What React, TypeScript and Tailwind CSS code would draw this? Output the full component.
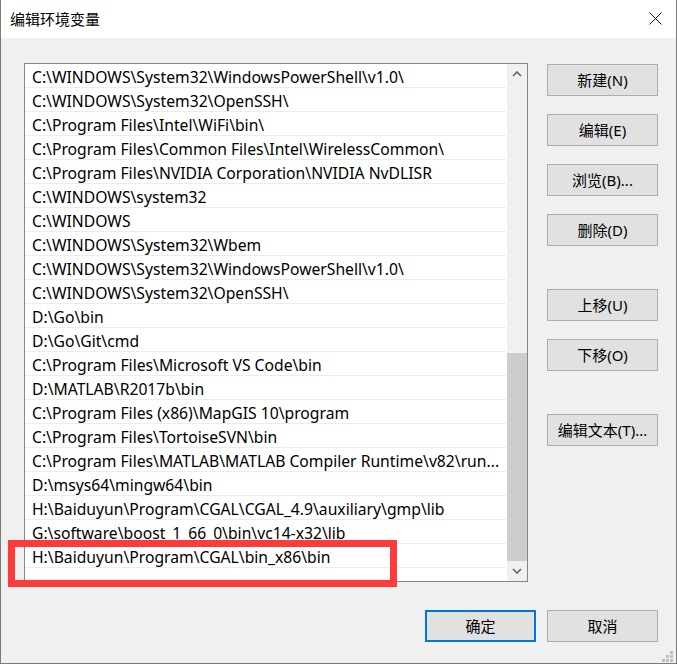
import React from "react";

const paths = [
  "C:\\WINDOWS\\System32\\WindowsPowerShell\\v1.0\\",
  "C:\\WINDOWS\\System32\\OpenSSH\\",
  "C:\\Program Files\\Intel\\WiFi\\bin\\",
  "C:\\Program Files\\Common Files\\Intel\\WirelessCommon\\",
  "C:\\Program Files\\NVIDIA Corporation\\NVIDIA NvDLISR",
  "C:\\WINDOWS\\system32",
  "C:\\WINDOWS",
  "C:\\WINDOWS\\System32\\Wbem",
  "C:\\WINDOWS\\System32\\WindowsPowerShell\\v1.0\\",
  "C:\\WINDOWS\\System32\\OpenSSH\\",
  "D:\\Go\\bin",
  "D:\\Go\\Git\\cmd",
  "C:\\Program Files\\Microsoft VS Code\\bin",
  "D:\\MATLAB\\R2017b\\bin",
  "C:\\Program Files (x86)\\MapGIS 10\\program",
  "C:\\Program Files\\TortoiseSVN\\bin",
  "C:\\Program Files\\MATLAB\\MATLAB Compiler Runtime\\v82\\run...",
  "D:\\msys64\\mingw64\\bin",
  "H:\\Baiduyun\\Program\\CGAL\\CGAL_4.9\\auxiliary\\gmp\\lib",
  "G:\\software\\boost_1_66_0\\bin\\vc14-x32\\lib",
  "H:\\Baiduyun\\Program\\CGAL\\bin_x86\\bin",
];

function Btn({ label, primary }: { label: string; primary?: boolean }) {
  return (
    <div
      className={
        "w-[111px] h-[32px] flex items-center justify-center bg-[#e1e1e1] text-[15px] text-black " +
        (primary ? "border-2 border-[#0078d7]" : "border border-[#adadad]")
      }
    >
      {label}
    </div>
  );
}

export default function App() {
  return (
    <div
      className="relative w-[677px] h-[664px] flex flex-col bg-[#f0f0f0] border-x border-b border-[#7a7a7a] overflow-hidden"
      style={{ fontFamily: '"Noto Sans", "Noto Sans CJK SC", sans-serif' }}
    >
      {/* title bar */}
      <div className="h-[38px] shrink-0 bg-white flex items-center justify-between pl-[9px] pr-[14px]">
        <span className="text-[15px] text-black leading-none">编辑环境变量</span>
        <svg width="13" height="13" viewBox="0 0 13 13" className="mt-[-1px]">
          <path d="M0.5 0.5 L12.5 12.5 M12.5 0.5 L0.5 12.5" stroke="#111" strokeWidth="1" fill="none" />
        </svg>
      </div>

      {/* body */}
      <div className="flex-1 flex flex-col pl-[23px] pr-[18px] pt-[25px]">
        <div className="flex gap-[19px]">
          {/* list box */}
          <div className="w-[504px] h-[519px] border border-[#828790] bg-white flex">
            <div className="flex-1 flex flex-col pr-px">
              {paths.map((p, i) => (
                <div
                  key={i}
                  className="h-[24px] shrink-0 border-b border-[#ececec] pl-[7px] pt-[4px] flex items-center text-[15.7px] text-black whitespace-nowrap overflow-hidden leading-none"
                >
                  {p}
                </div>
              ))}
            </div>
            {/* scrollbar */}
            <div className="w-[20px] flex flex-col bg-[#f0f0f0]">
              <div className="h-[20px] flex items-center justify-center">
                <svg width="10" height="6" viewBox="0 0 10 6">
                  <path d="M1 5 L5 1 L9 5" stroke="#606060" strokeWidth="1.6" fill="none" />
                </svg>
              </div>
              <div className="flex-1 flex flex-col justify-end">
                <div className="h-[208px] bg-[#cdcdcd]" />
              </div>
              <div className="h-[20px] flex items-center justify-center">
                <svg width="10" height="6" viewBox="0 0 10 6">
                  <path d="M1 1 L5 5 L9 1" stroke="#606060" strokeWidth="1.6" fill="none" />
                </svg>
              </div>
            </div>
          </div>

          {/* side buttons */}
          <div className="flex flex-col pt-px">
            <div className="flex flex-col gap-[18px]">
              <Btn label="新建(N)" />
              <Btn label="编辑(E)" />
              <Btn label="浏览(B)..." />
              <Btn label="删除(D)" />
            </div>
            <div className="flex flex-col gap-[18px] mt-[43px]">
              <Btn label="上移(U)" />
              <Btn label="下移(O)" />
            </div>
            <div className="mt-[43px]">
              <Btn label="编辑文本(T)..." />
            </div>
          </div>
        </div>

        {/* bottom buttons */}
        <div className="flex justify-end gap-[11px] mt-[28px]">
          <Btn label="确定" primary />
          <Btn label="取消" />
        </div>
      </div>

      {/* red highlight */}
      <div className="absolute left-[7px] top-[540px] w-[389px] h-[47px] border-[7px] border-[#fe3b3b]" />

      {/* resize grip */}
      <div className="absolute right-[3px] bottom-[1px] grid grid-cols-3 gap-px">
        <div className="w-[3px] h-[3px]" />
        <div className="w-[3px] h-[3px]" />
        <div className="w-[3px] h-[3px] bg-[#bfbfbf]" />
        <div className="w-[3px] h-[3px]" />
        <div className="w-[3px] h-[3px] bg-[#bfbfbf]" />
        <div className="w-[3px] h-[3px] bg-[#bfbfbf]" />
        <div className="w-[3px] h-[3px] bg-[#bfbfbf]" />
        <div className="w-[3px] h-[3px] bg-[#bfbfbf]" />
        <div className="w-[3px] h-[3px] bg-[#bfbfbf]" />
      </div>
    </div>
  );
}
